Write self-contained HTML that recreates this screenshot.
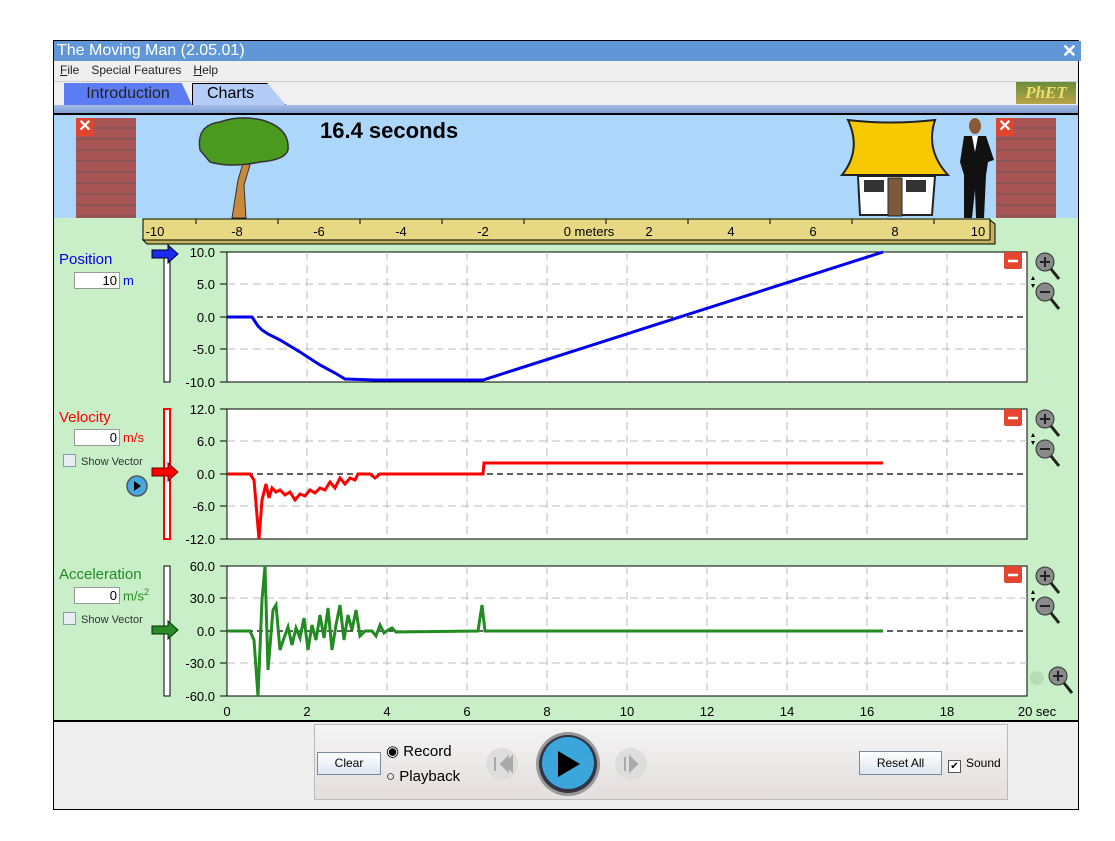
<!DOCTYPE html>
<html><head><meta charset="utf-8"><style>
body{margin:0;width:1115px;height:841px;background:#fff;position:relative;font-family:"Liberation Sans",sans-serif;overflow:hidden}
.a{position:absolute}
</style></head><body>
<div class="a" style="left:53px;top:40px;width:1026px;height:770px;border:1px solid #000;box-sizing:border-box;background:#eee"></div>
<div class="a" style="left:54px;top:41px;width:1024px;height:20px;background:#6197d6;color:#fff;font-size:16px;line-height:20px;padding-left:3px">The Moving Man (2.05.01)<span style="position:absolute;right:4px;font-weight:bold;font-size:18px">✕</span></div>
<div class="a" style="left:54px;top:61px;width:1024px;height:20px;background:#efefef;font-size:12px;line-height:18px;color:#222"><span style="margin-left:6px"><u>F</u>ile</span><span style="margin-left:12px">Special Features</span><span style="margin-left:12px"><u>H</u>elp</span></div>
<div class="a" style="left:54px;top:81px;width:1024px;height:24px;background:#f0f0f0;border-top:1px solid #ccc"></div>
<div class="a" style="left:64px;top:83px;width:128px;height:22px;background:#5b7cf2;color:#222;font-size:16px;line-height:22px;text-align:center;clip-path:polygon(0 0,92% 0,100% 100%,0 100%)">Introduction</div>
<div class="a" style="left:192px;top:83px;width:94px;height:22px;background:#b3cdf8;border:1px solid #000;border-bottom:none;box-sizing:border-box;font-size:16px;line-height:20px;padding-left:14px;clip-path:polygon(0 0,80% 0,100% 100%,0 100%)">Charts</div>
<div class="a" style="left:1016px;top:82px;width:60px;height:22px;background:linear-gradient(#6a8c3a,#b8a44a);color:#eedd66;font:italic bold 17px 'Liberation Serif',serif;line-height:22px;text-align:center">PhET</div>
<div class="a" style="left:54px;top:105px;width:1024px;height:8px;background:linear-gradient(#a5bce4,#7f9fd4)"></div>
<div class="a" style="left:54px;top:113px;width:1024px;height:607px;background:#c8efc8;border-top:2px solid #000;box-sizing:border-box"></div>
<div class="a" style="left:54px;top:115px;width:1024px;height:103px;background:#acd7fa"></div>
<div class="a" style="left:76px;top:118px;width:60px;height:100px;background:repeating-linear-gradient(#a55 0 9px,#855 9px 11px)"></div>
<div class="a" style="left:996px;top:118px;width:60px;height:100px;background:repeating-linear-gradient(#a55 0 9px,#855 9px 11px)"></div>
<div class="a" style="left:76px;top:118px;width:18px;height:18px;background:#e04530;color:#fff;font-weight:bold;text-align:center;line-height:18px;border-radius:2px">✕</div>
<div class="a" style="left:996px;top:118px;width:18px;height:18px;background:#e04530;color:#fff;font-weight:bold;text-align:center;line-height:18px;border-radius:2px">✕</div>
<div class="a" style="left:320px;top:118px;font-size:22px;font-weight:bold">16.4 seconds</div>
<svg class="a" style="left:0;top:0" width="1115" height="841">
<path d="M232 218 L238 180 L244 160 L250 165 L244 185 L246 218Z" fill="#c88a3a" stroke="#333"/>
<path d="M200 150 Q196 125 220 122 Q240 115 262 120 Q290 128 288 150 Q285 160 260 162 Q230 168 210 162Z" fill="#4a9a20" stroke="#333" stroke-width="1.5"/>
<path d="M848 120 Q890 125 935 120 Q925 150 948 175 L842 175 Q862 150 848 120Z" fill="#f8c800" stroke="#222" stroke-width="2"/>
<path d="M858 176 L935 176 L932 215 L860 215Z" fill="#fff" stroke="#222" stroke-width="2"/>
<rect x="888" y="178" width="14" height="38" fill="#7a5a3a" stroke="#222"/>
<rect x="864" y="180" width="20" height="12" fill="#333"/><rect x="906" y="180" width="20" height="12" fill="#333"/>
<ellipse cx="975" cy="126" rx="6" ry="8" fill="#8a5a3a"/>
<path d="M964 136 L986 136 L994 160 L988 162 L986 175 L984 218 L976 218 L975 190 L972 218 L964 218 L964 175 L960 162 Z" fill="#111"/>
<path d="M972 136 L978 136 L975 152Z" fill="#fff"/>
<rect x="143" y="219" width="847" height="21" fill="#e7d983" stroke="#000"/>
<path d="M990 220 L995 224 L995 244 L147 244 L143 240 L990 240Z" fill="#c4b460" stroke="#000"/>
<g font-size="13" text-anchor="middle">
<text x="155" y="236">-10</text><text x="237" y="236">-8</text><text x="319" y="236">-6</text><text x="401" y="236">-4</text><text x="483" y="236">-2</text><text x="589" y="236">0 meters</text><text x="649" y="236">2</text><text x="731" y="236">4</text><text x="813" y="236">6</text><text x="895" y="236">8</text><text x="978" y="236">10</text></g>
<g stroke="#000">
<path d="M196 219v5M278 219v5M360 219v5M442 219v5M524 219v5M606 219v5M688 219v5M770 219v5M852 219v5M934 219v5"/></g>
<rect x="227" y="252" width="800" height="130" fill="#fff" stroke="#000"/>
<rect x="227" y="409" width="800" height="130" fill="#fff" stroke="#000"/>
<rect x="227" y="566" width="800" height="130" fill="#fff" stroke="#000"/>
<g stroke="#bbb" stroke-dasharray="8,5">
<path d="M307 252v130M387 252v130M467 252v130M547 252v130M627 252v130M707 252v130M787 252v130M867 252v130M947 252v130"/>
<path d="M307 409v130M387 409v130M467 409v130M547 409v130M627 409v130M707 409v130M787 409v130M867 409v130M947 409v130"/>
<path d="M307 566v130M387 566v130M467 566v130M547 566v130M627 566v130M707 566v130M787 566v130M867 566v130M947 566v130"/>
<path d="M227 284h800M227 349h800M227 441h800M227 506h800M227 598h800M227 663h800"/>
</g>
<g stroke="#000" stroke-dasharray="6,4" stroke-width="1.3"><path d="M227 317h800M227 474h800M227 631h800"/></g>
<g font-size="13" text-anchor="end">
<text x="215" y="257">10.0</text><text x="215" y="289">5.0</text><text x="215" y="322">0.0</text><text x="215" y="354">-5.0</text><text x="215" y="387">-10.0</text>
<text x="215" y="414">12.0</text><text x="215" y="446">6.0</text><text x="215" y="479">0.0</text><text x="215" y="511">-6.0</text><text x="215" y="544">-12.0</text>
<text x="215" y="571">60.0</text><text x="215" y="603">30.0</text><text x="215" y="636">0.0</text><text x="215" y="668">-30.0</text><text x="215" y="701">-60.0</text></g>
<g stroke="#000"><path d="M220 252h7M220 284h7M220 317h7M220 349h7M220 382h7M220 409h7M220 441h7M220 474h7M220 506h7M220 539h7M220 566h7M220 598h7M220 631h7M220 663h7M220 696h7"/></g>
<g font-size="13" text-anchor="middle">
<text x="227" y="716">0</text><text x="307" y="716">2</text><text x="387" y="716">4</text><text x="467" y="716">6</text><text x="547" y="716">8</text><text x="627" y="716">10</text><text x="707" y="716">12</text><text x="787" y="716">14</text><text x="867" y="716">16</text><text x="947" y="716">18</text><text x="1037" y="716">20 sec</text></g>
<polyline fill="none" stroke="#0000ee" stroke-width="3" points="227,317 252,317 258,326 262,330 268,334 280,340 300,352 320,365 335,373 345,379 375,380 483,380 883,252"/>
<polyline fill="none" stroke="#f00" stroke-width="3" points="227,474 250,474 254,480 259,539 262,500 266,484 269,498 272,488 276,492 280,490 285,495 290,492 295,500 300,494 305,496 310,490 315,493 320,488 325,490 330,482 335,488 340,478 345,484 350,478 355,480 358,474 370,474 375,478 380,474 483,474 484,463 883,463"/>
<polyline fill="none" stroke="#228b22" stroke-width="3" points="227,631 250,631 254,640 258,696 262,600 265,566 268,670 273,610 276,605 280,650 284,638 288,627 292,645 296,628 300,638 304,618 308,650 312,625 316,640 320,615 324,638 328,608 332,650 336,625 340,605 344,640 348,615 352,630 356,610 360,636 365,631 372,631 376,636 380,625 384,633 388,630 392,628 396,632 478,631 482,605 485,631 883,631"/>
<rect x="164" y="252" width="6" height="130" fill="#fff" stroke="#000"/>
<rect x="164" y="409" width="6" height="130" fill="#fff" stroke="#f00" stroke-width="2"/>
<rect x="164" y="566" width="6" height="130" fill="#fff" stroke="#000"/>
<path d="M152 250h16v-5l10 9-10 9v-5h-16z" fill="#1a2af0" stroke="#002"/>
<path d="M152 468h16v-5l10 9-10 9v-5h-16z" fill="#f00" stroke="#600"/>
<path d="M152 626h16v-5l10 9-10 9v-5h-16z" fill="#2a8a2a" stroke="#030"/>
<circle cx="137" cy="486" r="10" fill="#48a8e0" stroke="#555" stroke-width="1.5"/><path d="M134 481l7 5-7 5z"/>
<g fill="#e5452e"><rect x="1004" y="252" width="18" height="17" rx="2"/><rect x="1004" y="409" width="18" height="17" rx="2"/><rect x="1004" y="566" width="18" height="17" rx="2"/></g>
<g stroke="#fff" stroke-width="2.5"><path d="M1008 261h10M1008 418h10M1008 575h10"/></g>
<g fill="#8a8a8a" stroke="#333">
<circle cx="1045" cy="262" r="9"/><circle cx="1045" cy="292" r="9"/>
<circle cx="1045" cy="419" r="9"/><circle cx="1045" cy="449" r="9"/>
<circle cx="1045" cy="576" r="9"/><circle cx="1045" cy="606" r="9"/>
<circle cx="1058" cy="676" r="9"/>
</g>
<g stroke="#222" stroke-width="3"><path d="M1051 269l8 10M1051 299l8 10M1051 426l8 10M1051 456l8 10M1051 583l8 10M1051 613l8 10M1064 683l8 10"/></g>
<g stroke="#222" stroke-width="2"><path d="M1040 262h10M1045 257v10M1040 292h10M1040 419h10M1045 414v10M1040 449h10M1040 576h10M1045 571v10M1040 606h10M1053 676h10M1058 671v10"/></g>
<path d="M1031 280l2-4 2 4zM1031 284l2 4 2-4zM1031 437l2-4 2 4zM1031 441l2 4 2-4zM1031 594l2-4 2 4zM1031 598l2 4 2-4z" fill="#000"/>
<circle cx="1037" cy="678" r="7" fill="#b8dcb8"/>
</svg>
<div class="a" style="left:59px;top:251px;color:#00e;font-size:15px">Position</div>
<div class="a" style="left:74px;top:272px;width:46px;height:17px;background:#fff;border:1px solid #999;font-size:13px;text-align:right;box-sizing:border-box;padding-right:2px">10</div>
<div class="a" style="left:123px;top:273px;color:#00e;font-size:13px">m</div>
<div class="a" style="left:59px;top:409px;color:#f00;font-size:15px">Velocity</div>
<div class="a" style="left:74px;top:429px;width:46px;height:17px;background:#fff;border:1px solid #999;font-size:13px;text-align:right;box-sizing:border-box;padding-right:2px">0</div>
<div class="a" style="left:123px;top:430px;color:#f00;font-size:13px">m/s</div>
<div class="a" style="left:63px;top:454px;font-size:11px;color:#333"><span style="display:inline-block;width:11px;height:11px;border:1px solid #8899aa;background:#e8eef4;vertical-align:-2px;margin-right:5px"></span>Show Vector</div>
<div class="a" style="left:59px;top:566px;color:#228b22;font-size:15px">Acceleration</div>
<div class="a" style="left:74px;top:587px;width:46px;height:17px;background:#fff;border:1px solid #999;font-size:13px;text-align:right;box-sizing:border-box;padding-right:2px">0</div>
<div class="a" style="left:123px;top:587px;color:#228b22;font-size:13px">m/s<sup style="font-size:9px">2</sup></div>
<div class="a" style="left:63px;top:612px;font-size:11px;color:#333"><span style="display:inline-block;width:11px;height:11px;border:1px solid #8899aa;background:#e8eef4;vertical-align:-2px;margin-right:5px"></span>Show Vector</div>
<div class="a" style="left:54px;top:720px;width:1024px;height:2px;background:#000"></div>
<div class="a" style="left:314px;top:724px;width:694px;height:76px;background:linear-gradient(#f4f4f4,#e4dede);border:1px solid #bbb;box-sizing:border-box"></div>
<div class="a" style="left:317px;top:752px;width:64px;height:23px;background:linear-gradient(#fff,#dde6f0);border:1px solid #7a8a9a;box-sizing:border-box;font-size:12px;text-align:center;line-height:21px">Clear</div>
<div class="a" style="left:386px;top:742px;font-size:15px">◉ Record</div>
<div class="a" style="left:386px;top:768px;font-size:15px">○ Playback</div>
<svg class="a" style="left:480px;top:730px" width="180" height="70">
<circle cx="22" cy="34" r="16" fill="#ddd"/><path d="M15 27v14M28 27l-7 7 7 7zM32 27l-6 7 6 7z" fill="#aaa" stroke="#aaa" stroke-width="2"/>
<circle cx="88" cy="34" r="32" fill="#999"/><circle cx="88" cy="34" r="29" fill="#334"/><circle cx="88" cy="33" r="26" fill="#3aa6dc"/><path d="M78 21l22 13-22 13z"/>
<circle cx="151" cy="34" r="16" fill="#ddd"/><path d="M145 27v14M150 27l7 7-7 7z" fill="#aaa" stroke="#aaa" stroke-width="2"/>
</svg>
<div class="a" style="left:859px;top:751px;width:83px;height:24px;background:linear-gradient(#fff,#dde6f0);border:1px solid #7a8a9a;box-sizing:border-box;font-size:12px;text-align:center;line-height:22px">Reset All</div>
<div class="a" style="left:948px;top:756px;font-size:12px"><span style="display:inline-block;width:11px;height:11px;border:1px solid #555;background:#fff;vertical-align:-2px;margin-right:5px;font-size:10px;line-height:11px;text-align:center">✔</span>Sound</div>
</body></html>
